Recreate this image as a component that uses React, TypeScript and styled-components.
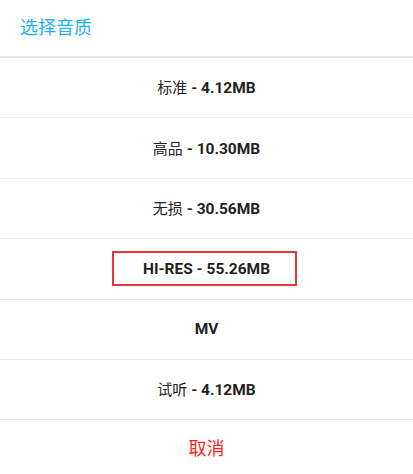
import styled, { createGlobalStyle } from 'styled-components';

const GlobalStyle = createGlobalStyle`
	html, body {
		margin: 0;
		padding: 0;
		background: #ffffff;
	}
	body {
		font-family: Roboto, 'Noto Sans CJK SC', sans-serif;
	}
`;

const Sheet = styled.div`
	width: 100%;
	height: 474px;
	display: flex;
	flex-direction: column;
	background: #ffffff;
	overflow: hidden;
`;

const Header = styled.div`
	height: 58px;
	box-sizing: border-box;
	display: flex;
	align-items: center;
	padding: 0 20px 4px;
	border-bottom: 2px solid #e6e6e6;
	font-size: 18px;
	color: #1fb1f3;
	flex-shrink: 0;
`;

const Option = styled.div<{ $last?: boolean }>`
	height: ${ ({ $last }) => $last ? 'auto' : '59.4px' };
	flex: ${ ({ $last }) => $last ? '1' : 'none' };
	display: flex;
	align-items: center;
	justify-content: center;
	border-bottom: ${ ({ $last }) => $last ? 'none' : '1px solid #e8e8e8' };
`;

const Label = styled.span<{ $highlight?: boolean }>`
	position: relative;
	font-size: 15.5px;
	font-weight: 700;
	color: #222222;
	line-height: 18px;

	&::after {
		content: '';
		display: ${ ({ $highlight }) => $highlight ? 'block' : 'none' };
		position: absolute;
		top: -9px;
		bottom: -8px;
		left: -31px;
		right: -27px;
		border: 2px solid #e8333a;
	}
`;

const Cjk = styled.span`
	font-family: 'Noto Sans CJK SC', sans-serif;
	font-size: 15px;
	font-weight: 400;
`;

const Cancel = styled.span`
	font-size: 18px;
	color: #ff2424;
	font-family: 'Noto Sans CJK SC', sans-serif;
`;

const options = [
	{ name: '标准', size: '4.12MB' },
	{ name: '高品', size: '10.30MB' },
	{ name: '无损', size: '30.56MB' },
	{ name: 'HI-RES', size: '55.26MB', selected: true },
	{ name: 'MV' },
	{ name: '试听', size: '4.12MB' },
];

const renderName = (name: string) => (/[\u4e00-\u9fff]/.test(name) ? <Cjk>{ name }</Cjk> : name);

const App = () => (
	<>
		<GlobalStyle />
		<Sheet>
			<Header>选择音质</Header>
			{
				options.map((option) => (
					<Option key={ option.name }>
						<Label $highlight={ option.selected }>
							{ renderName(option.name) }
							{ option.size ? ` - ${ option.size }` : '' }
						</Label>
					</Option>
				))
			}
			<Option $last>
				<Cancel>取消</Cancel>
			</Option>
		</Sheet>
	</>
);

export default App;
